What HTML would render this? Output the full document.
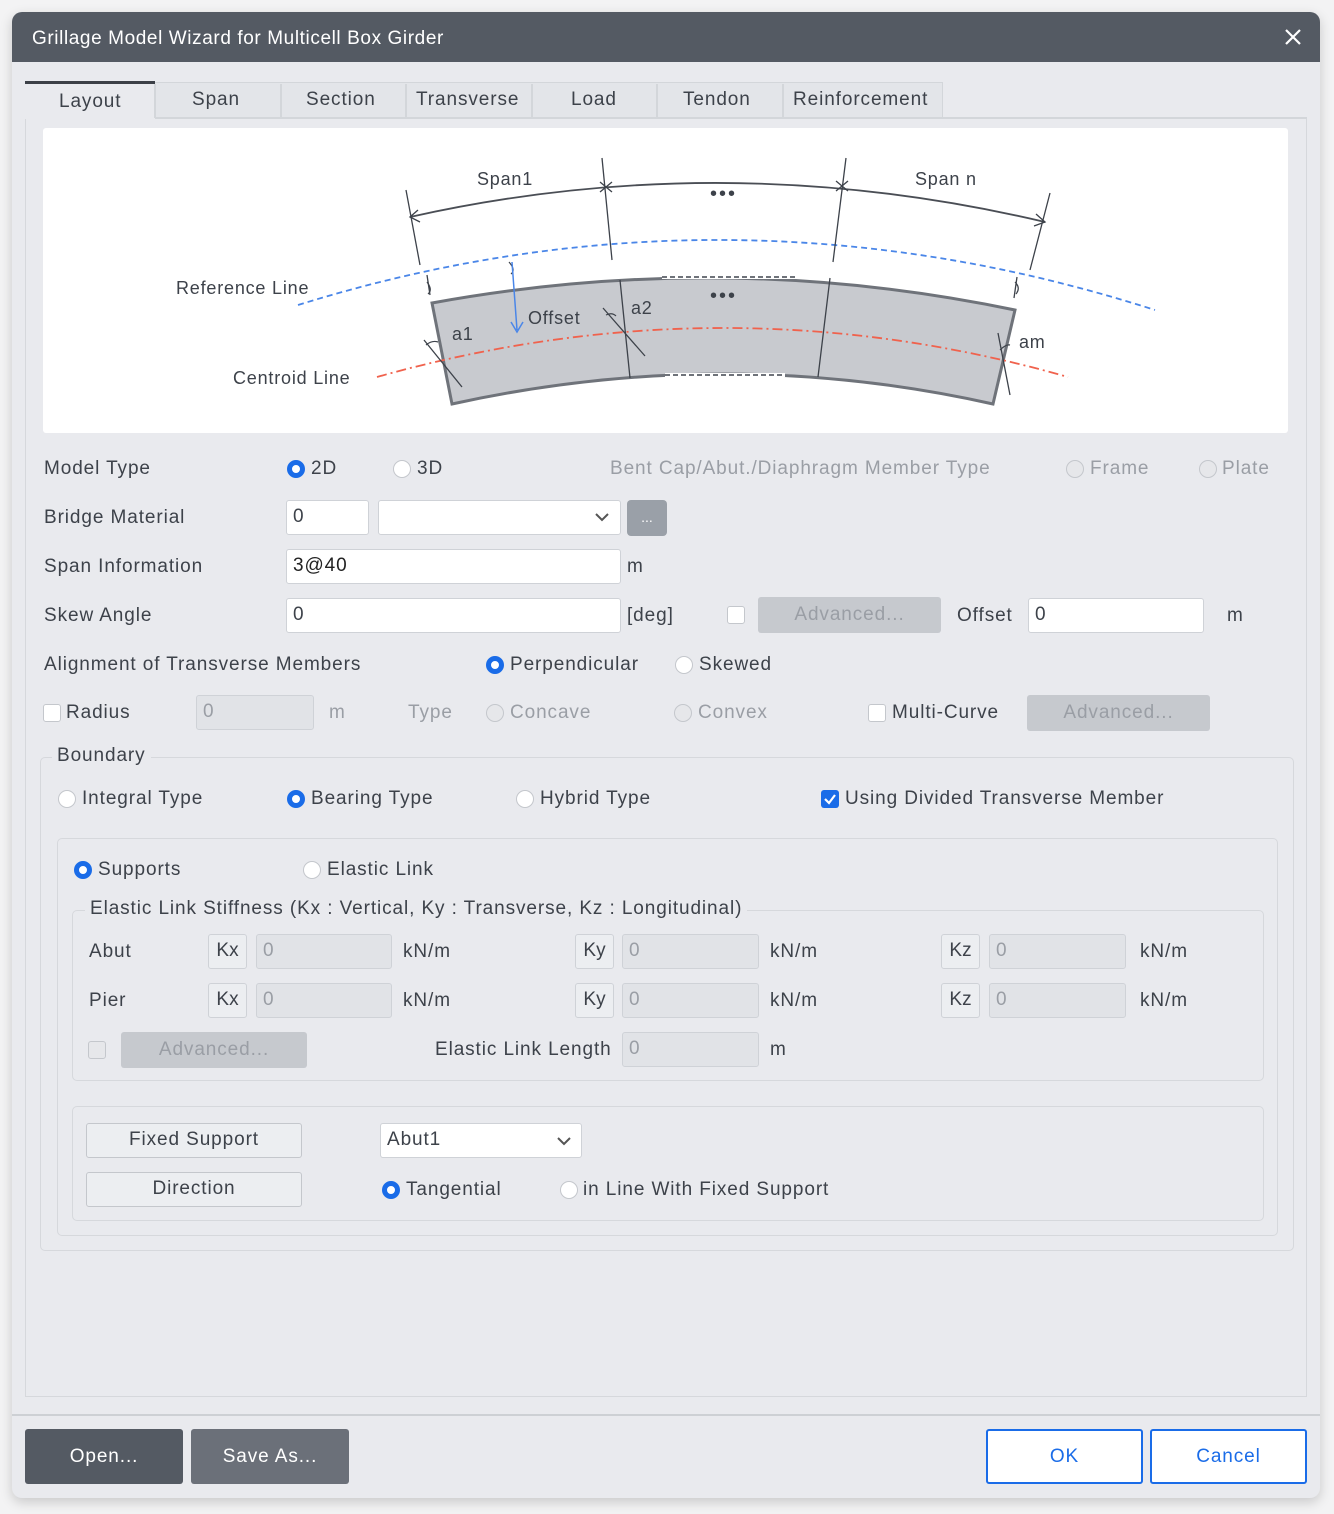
<!DOCTYPE html>
<html><head><meta charset="utf-8"><style>
*{box-sizing:border-box;margin:0;padding:0}
body{width:1334px;height:1514px;background:#f3f3f4;font-family:"Liberation Sans",sans-serif;font-size:19px;letter-spacing:0.9px;color:#3d424a;position:relative;overflow:hidden}
.a{position:absolute}
.t{position:absolute;line-height:22px;white-space:nowrap;margin-top:1px}
.g{color:#9a9ea5}
.in{position:absolute;height:35px;background:#fff;border:1.5px solid #cfd2d7;border-radius:3px;line-height:32px;padding-left:6px}
.dis{background:#e1e3e7;color:#9a9ea5}
.btn{position:absolute;background:#c6c9ce;border-radius:3px;color:#9a9ea5;text-align:center;line-height:36px;height:36px}
.obtn{position:absolute;border:1.5px solid #c4c7cc;border-radius:3px;text-align:center;line-height:32px;height:35px;background:#eceef1}
.r{position:absolute;width:18px;height:18px;border-radius:50%;background:#fff;border:1.5px solid #c4c7cc}
.r.on{border:5px solid #1a6ce8;background:#fff}
.r.d{background:#e6e7ea}
.cb{position:absolute;width:18px;height:18px;border-radius:3px;background:#fff;border:1.5px solid #c4c7cc}
.box{position:absolute;border:1.5px solid #d6d8dc;border-radius:5px}
.lg{position:absolute;background:#e9eaee;padding:0 5px;line-height:22px}
.kb{position:absolute;height:35px;width:39px;border:1.5px solid #cfd2d7;border-radius:3px;text-align:center;line-height:32px;background:#eceef1;letter-spacing:0}
</style></head><body>
<div class="a" style="left:12px;top:12px;width:1308px;height:1486px;background:#e9eaee;border-radius:10px;box-shadow:0 4px 12px rgba(0,0,0,.18);overflow:hidden">
<div class="a" style="left:0;top:0;width:1308px;height:50px;background:#545a63"></div>
</div>
<div class="t" style="left:32px;top:27px;color:#fff;letter-spacing:0.6px">Grillage Model Wizard for Multicell Box Girder</div>
<svg class="a" style="left:1283px;top:27px" width="20" height="20"><path d="M3 3L17 17M17 3L3 17" stroke="#fff" stroke-width="2.2"/></svg>

<div class="a" style="left:25px;top:118px;width:1282px;height:1279px;border:1.5px solid #d6d8dc;border-top:none"></div>
<div class="a" style="left:25px;top:82px;width:918px;height:37px;background:#e3e5e9;border:1.5px solid #d3d6da;border-bottom:none"></div>
<div class="a" style="left:25px;top:81px;width:130px;height:38px;background:#e9eaee;border-top:3px solid #3c4047"></div>
<div class="a" style="left:154px;top:84px;width:1.5px;height:34px;background:#d3d6da"></div>
<div class="a" style="left:280px;top:84px;width:1.5px;height:34px;background:#d3d6da"></div>
<div class="a" style="left:405px;top:84px;width:1.5px;height:34px;background:#d3d6da"></div>
<div class="a" style="left:531px;top:84px;width:1.5px;height:34px;background:#d3d6da"></div>
<div class="a" style="left:656px;top:84px;width:1.5px;height:34px;background:#d3d6da"></div>
<div class="a" style="left:782px;top:84px;width:1.5px;height:34px;background:#d3d6da"></div>
<div class="a" style="left:155px;top:117px;width:1152px;height:1.5px;background:#d3d6da"></div>
<div class="t" style="left:59px;top:90px">Layout</div>
<div class="t" style="left:192px;top:88px">Span</div>
<div class="t" style="left:306px;top:88px">Section</div>
<div class="t" style="left:416px;top:88px">Transverse</div>
<div class="t" style="left:571px;top:88px">Load</div>
<div class="t" style="left:683px;top:88px">Tendon</div>
<div class="t" style="left:793px;top:88px">Reinforcement</div>

<div class="a" style="left:43px;top:128px;width:1245px;height:305px;background:#fff;border-radius:3px"></div>
<svg class="a" style="left:0;top:0" width="1334" height="440">
<path d="M432 303 Q725 249.5 1015 310 L993 404 Q725 344 452 404 Z" fill="#c8cacf" stroke="#6f737a" stroke-width="3"/>
<path d="M662 277 L795 277" stroke="#fff" stroke-width="4" fill="none"/>
<path d="M662 277 L795 277" stroke="#6f737a" stroke-width="2" stroke-dasharray="5 3" fill="none"/>
<path d="M665 375 L785 375" stroke="#fff" stroke-width="4"/>
<path d="M665 375 L785 375" stroke="#6f737a" stroke-width="2" stroke-dasharray="5 3"/>
<path d="M620 280 L630 378 M830 278 L818 377" stroke="#3d424a" stroke-width="1.3"/>
<path d="M298 305 Q725 172.5 1155 310" fill="none" stroke="#4a86e8" stroke-width="1.8" stroke-dasharray="6 4"/>
<path d="M377 377 Q725 279 1068 377" fill="none" stroke="#f0624d" stroke-width="1.8" stroke-dasharray="10 4 2 4"/>
<path d="M410 217 Q725 146.5 1045 222" fill="none" stroke="#4a4e55" stroke-width="1.8"/>
<path d="M406 190 L420 265 M602 158 L612 260 M846 158 L833 262 M1050 193 L1030 270 M427 275 L430 295 M1017 277 L1014 298" stroke="#3d424a" stroke-width="1.3"/>
<path d="M418 210 L410 217 L420 222 M1036 214 L1045 222 L1034 226 M600 182 L612 192 M600 192 L612 182 M836 181 L848 191 M836 191 L848 181" stroke="#3d424a" stroke-width="1.3" fill="none"/>
<path d="M424 340 L462 387 M603 308 L645 356 M998 333 L1010 395" stroke="#3d424a" stroke-width="1.3"/>
<path d="M427 282 Q433 290 428 294 M509 262 Q516 270 511 274 M426 345 Q432 340 438 342 M606 315 Q612 312 616 316 M1015 282 Q1021 288 1016 294 M1000 350 Q1006 344 1010 345" stroke="#3d424a" stroke-width="1.2" fill="none"/>
<path d="M512 262 L517 330 M511 322 L517 332 L523 322" stroke="#4a86e8" stroke-width="1.5" fill="none"/>
<g font-family="Liberation Sans" font-size="18" fill="#3d424a" letter-spacing="0.8">
<text x="477" y="185">Span1</text><text x="915" y="185">Span n</text>
<text x="176" y="294">Reference Line</text><text x="233" y="384">Centroid Line</text>
<text x="452" y="340">a1</text><text x="528" y="324">Offset</text><text x="631" y="314">a2</text><text x="1019" y="348">am</text>
<text x="710" y="200" font-size="20" letter-spacing="2">•••</text><text x="710" y="302" font-size="20" letter-spacing="2">•••</text>
</g>
</svg>

<div class="t" style="left:44px;top:457px">Model Type</div>
<div class="r on" style="left:287px;top:460px"></div><div class="t" style="left:311px;top:457px">2D</div>
<div class="r" style="left:393px;top:460px"></div><div class="t" style="left:417px;top:457px">3D</div>
<div class="t g" style="left:610px;top:457px">Bent Cap/Abut./Diaphragm Member Type</div>
<div class="r d" style="left:1066px;top:460px"></div><div class="t g" style="left:1090px;top:457px">Frame</div>
<div class="r d" style="left:1199px;top:460px"></div><div class="t g" style="left:1222px;top:457px">Plate</div>

<div class="t" style="left:44px;top:506px">Bridge Material</div>
<div class="in" style="left:286px;top:500px;width:83px">0</div>
<div class="in" style="left:378px;top:500px;width:243px"></div>
<svg class="a" style="left:594px;top:511px" width="16" height="12"><path d="M2 3L8 9L14 3" stroke="#555" stroke-width="2" fill="none"/></svg>
<div class="a" style="left:627px;top:500px;width:40px;height:36px;background:#9aa0a8;border-radius:4px;color:#fff;text-align:center;line-height:34px;font-size:14px;letter-spacing:0">...</div>

<div class="t" style="left:44px;top:555px">Span Information</div>
<div class="in" style="left:286px;top:549px;width:335px;color:#222">3@40</div>
<div class="t" style="left:627px;top:555px">m</div>

<div class="t" style="left:44px;top:604px">Skew Angle</div>
<div class="in" style="left:286px;top:598px;width:335px">0</div>
<div class="t" style="left:627px;top:604px">[deg]</div>
<div class="cb" style="left:727px;top:606px"></div>
<div class="btn" style="left:758px;top:597px;width:183px">Advanced...</div>
<div class="t" style="left:957px;top:604px">Offset</div>
<div class="in" style="left:1028px;top:598px;width:176px">0</div>
<div class="t" style="left:1227px;top:604px">m</div>

<div class="t" style="left:44px;top:653px">Alignment of Transverse Members</div>
<div class="r on" style="left:486px;top:656px"></div><div class="t" style="left:510px;top:653px">Perpendicular</div>
<div class="r" style="left:675px;top:656px"></div><div class="t" style="left:699px;top:653px">Skewed</div>

<div class="cb" style="left:43px;top:704px"></div><div class="t" style="left:66px;top:701px">Radius</div>
<div class="in dis" style="left:196px;top:695px;width:118px">0</div>
<div class="t g" style="left:329px;top:701px">m</div>
<div class="t g" style="left:408px;top:701px">Type</div>
<div class="r d" style="left:486px;top:704px"></div><div class="t g" style="left:510px;top:701px">Concave</div>
<div class="r d" style="left:674px;top:704px"></div><div class="t g" style="left:698px;top:701px">Convex</div>
<div class="cb" style="left:868px;top:704px"></div><div class="t" style="left:892px;top:701px">Multi-Curve</div>
<div class="btn" style="left:1027px;top:695px;width:183px">Advanced...</div>

<div class="box" style="left:40px;top:757px;width:1254px;height:494px"></div>
<div class="lg" style="left:52px;top:745px">Boundary</div>
<div class="r" style="left:58px;top:790px"></div><div class="t" style="left:82px;top:787px">Integral Type</div>
<div class="r on" style="left:287px;top:790px"></div><div class="t" style="left:311px;top:787px">Bearing Type</div>
<div class="r" style="left:516px;top:790px"></div><div class="t" style="left:540px;top:787px">Hybrid Type</div>
<div class="a" style="left:821px;top:790px;width:18px;height:18px;border-radius:3px;background:#1a6ce8"></div>
<svg class="a" style="left:821px;top:790px" width="18" height="18"><path d="M4 9L8 13L14 5" stroke="#fff" stroke-width="2.2" fill="none"/></svg>
<div class="t" style="left:845px;top:787px">Using Divided Transverse Member</div>

<div class="box" style="left:57px;top:838px;width:1221px;height:398px"></div>
<div class="r on" style="left:74px;top:861px"></div><div class="t" style="left:98px;top:858px">Supports</div>
<div class="r" style="left:303px;top:861px"></div><div class="t" style="left:327px;top:858px">Elastic Link</div>

<div class="box" style="left:72px;top:910px;width:1192px;height:171px"></div>
<div class="lg" style="left:85px;top:898px">Elastic Link Stiffness (Kx : Vertical, Ky : Transverse, Kz : Longitudinal)</div>

<div class="t" style="left:89px;top:940px">Abut</div>
<div class="kb" style="left:208px;top:934px">Kx</div><div class="in dis" style="left:256px;top:934px;width:136px">0</div><div class="t" style="left:403px;top:940px">kN/m</div>
<div class="kb" style="left:575px;top:934px">Ky</div><div class="in dis" style="left:622px;top:934px;width:137px">0</div><div class="t" style="left:770px;top:940px">kN/m</div>
<div class="kb" style="left:941px;top:934px">Kz</div><div class="in dis" style="left:989px;top:934px;width:137px">0</div><div class="t" style="left:1140px;top:940px">kN/m</div>

<div class="t" style="left:89px;top:989px">Pier</div>
<div class="kb" style="left:208px;top:983px">Kx</div><div class="in dis" style="left:256px;top:983px;width:136px">0</div><div class="t" style="left:403px;top:989px">kN/m</div>
<div class="kb" style="left:575px;top:983px">Ky</div><div class="in dis" style="left:622px;top:983px;width:137px">0</div><div class="t" style="left:770px;top:989px">kN/m</div>
<div class="kb" style="left:941px;top:983px">Kz</div><div class="in dis" style="left:989px;top:983px;width:137px">0</div><div class="t" style="left:1140px;top:989px">kN/m</div>

<div class="cb" style="left:88px;top:1041px;background:#e6e7ea"></div>
<div class="btn" style="left:121px;top:1032px;width:186px">Advanced...</div>
<div class="t" style="left:435px;top:1038px">Elastic Link Length</div>
<div class="in dis" style="left:622px;top:1032px;width:137px">0</div><div class="t" style="left:770px;top:1038px">m</div>

<div class="box" style="left:72px;top:1106px;width:1192px;height:115px"></div>
<div class="obtn" style="left:86px;top:1123px;width:216px">Fixed Support</div>
<div class="in" style="left:380px;top:1123px;width:202px">Abut1</div>
<svg class="a" style="left:556px;top:1135px" width="16" height="12"><path d="M2 3L8 9L14 3" stroke="#555" stroke-width="2" fill="none"/></svg>
<div class="obtn" style="left:86px;top:1172px;width:216px">Direction</div>
<div class="r on" style="left:382px;top:1181px"></div><div class="t" style="left:406px;top:1178px">Tangential</div>
<div class="r" style="left:560px;top:1181px"></div><div class="t" style="left:583px;top:1178px">in Line With Fixed Support</div>

<div class="a" style="left:12px;top:1414px;width:1308px;height:2px;background:#cdd0d4"></div>
<div class="a" style="left:25px;top:1429px;width:158px;height:55px;background:#545a63;border-radius:3px;color:#fff;text-align:center;line-height:55px">Open...</div>
<div class="a" style="left:191px;top:1429px;width:158px;height:55px;background:#6b7079;border-radius:3px;color:#fff;text-align:center;line-height:55px">Save As...</div>
<div class="a" style="left:986px;top:1429px;width:157px;height:55px;background:#fff;border:2px solid #1a6ce8;border-radius:3px;color:#1a6ce8;text-align:center;line-height:51px">OK</div>
<div class="a" style="left:1150px;top:1429px;width:157px;height:55px;background:#fff;border:2px solid #1a6ce8;border-radius:3px;color:#1a6ce8;text-align:center;line-height:51px">Cancel</div>
</body></html>
